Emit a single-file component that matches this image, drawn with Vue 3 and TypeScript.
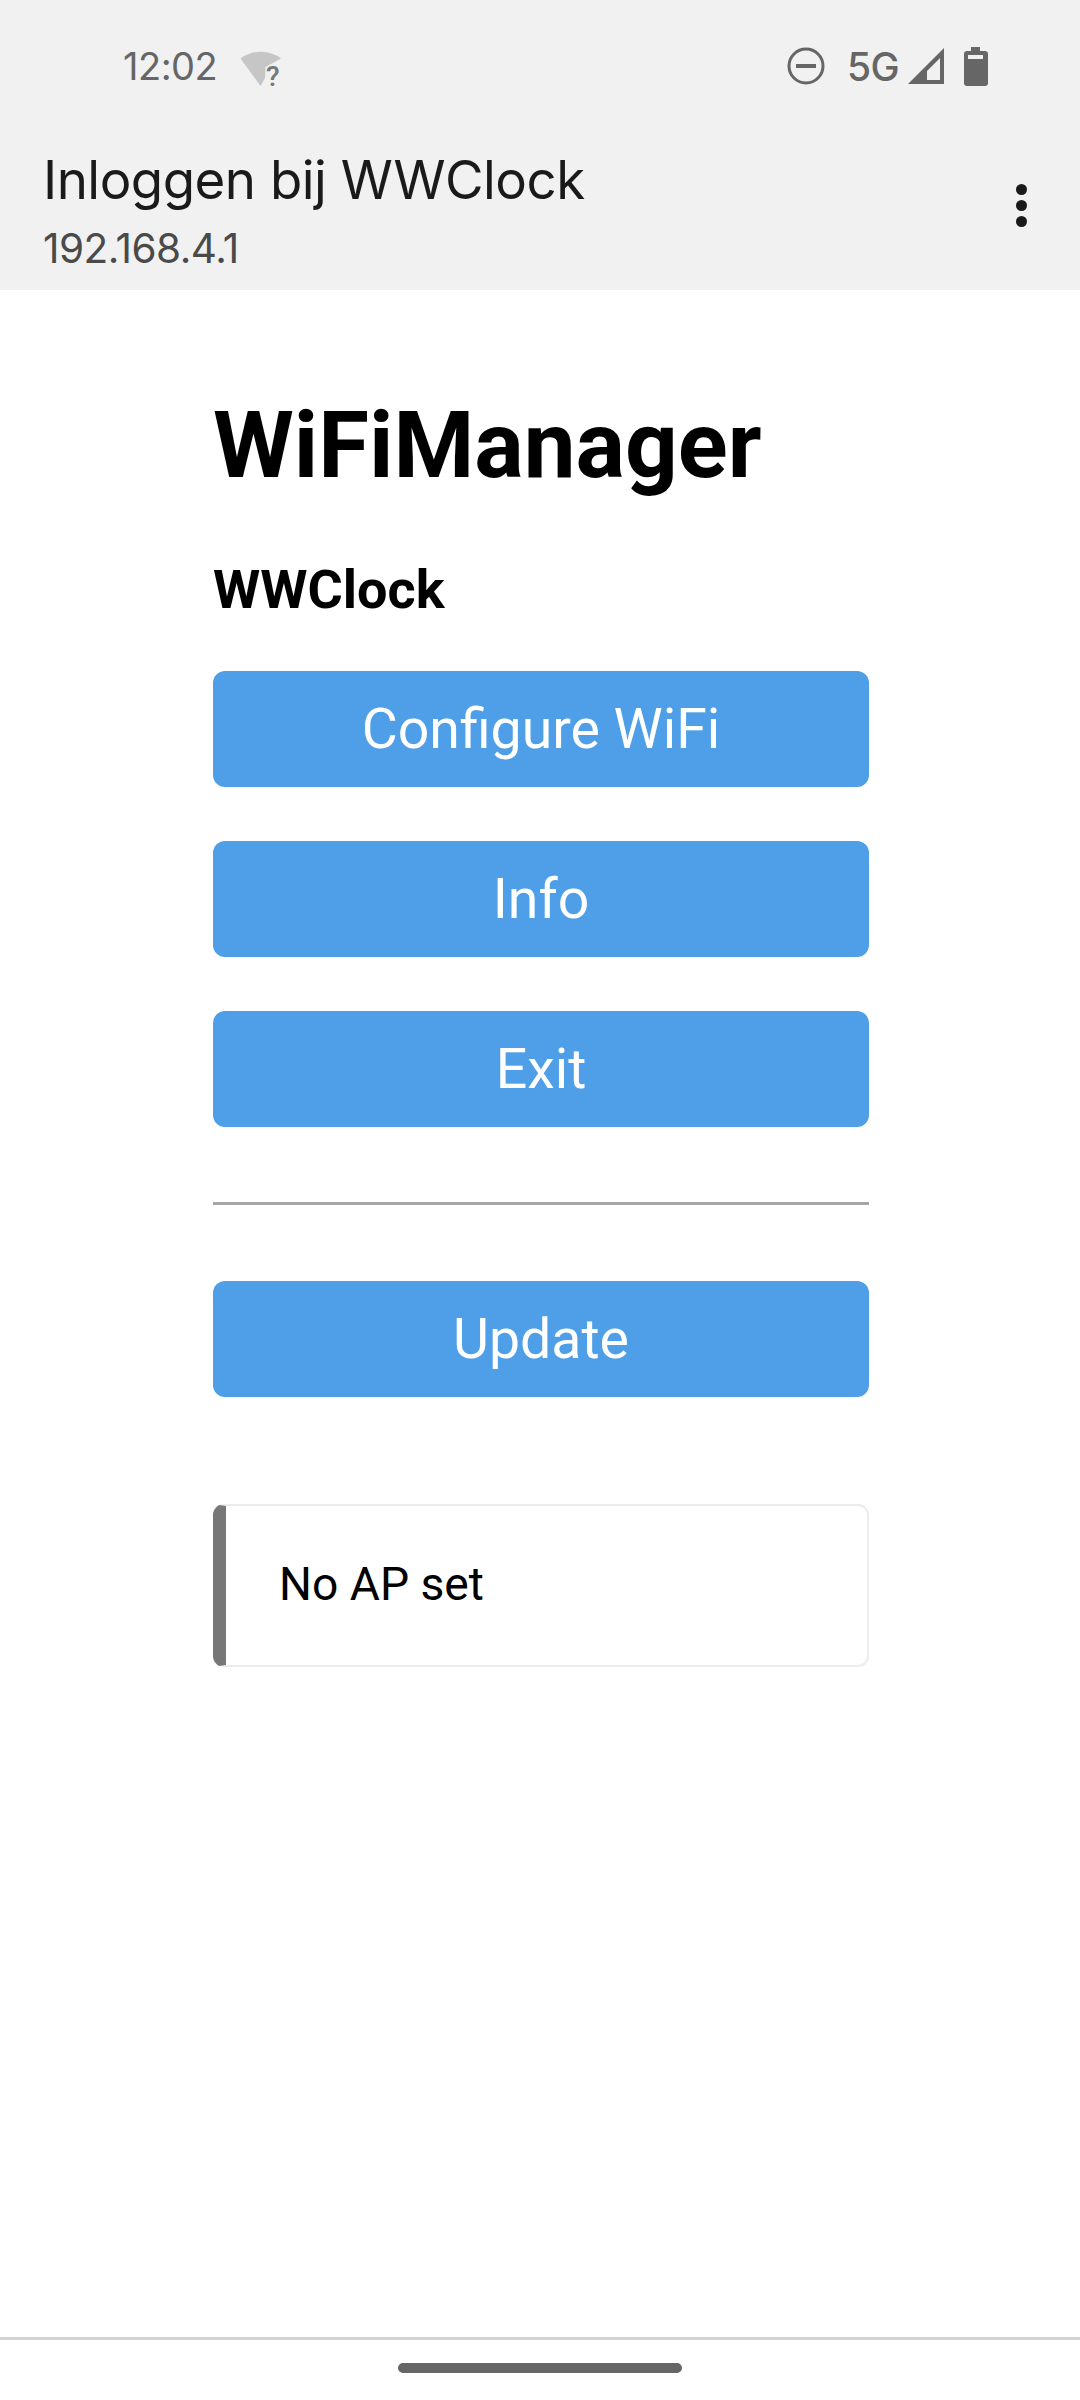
<script setup lang="ts">
const menuItems = ["Configure WiFi", "Info", "Exit"];
</script>

<template>
  <div class="screen">
    <header class="topbar">
      <div class="status">
        <span class="time">12:02</span>
        <svg class="wifi" width="44" height="36" viewBox="0 0 44 36">
          <path d="M1.500 6.500 A34 34 0 0 1 42 6.500 L26.500 15 L26 26 L21.500 34 Z" fill="#c6c6c6" />
          <text x="27" y="34" class="wifi-q">?</text>
        </svg>
        <span class="spacer"></span>
        <svg class="dnd" width="40" height="40" viewBox="0 0 40 40">
          <circle cx="20" cy="20" r="17" fill="none" stroke="#666" stroke-width="3" />
          <rect x="10" y="18" width="20" height="4" fill="#666" />
        </svg>
        <span class="net">5G</span>
        <svg class="signal" width="38" height="38" viewBox="0 0 38 38">
          <path d="M1 37 L37 1 V37 Z M20 33 H33 V11 L20 24 Z" fill="#666" fill-rule="evenodd" />
        </svg>
        <svg class="battery" width="24" height="39" viewBox="0 0 24 39">
          <path d="M7 0 H16 V4 H21 Q24 4 24 7 V36 Q24 39 21 39 H3 Q0 39 0 36 V7 Q0 4 3 4 H7 Z" fill="#666" />
          <rect x="4" y="8" width="15" height="4" fill="#f1f1f1" />
        </svg>
      </div>
      <div class="titlebar">
        <div class="titles">
          <div class="title">Inloggen bij WWClock</div>
          <div class="address">192.168.4.1</div>
        </div>
        <div class="more">
          <i></i><i></i><i></i>
        </div>
      </div>
    </header>

    <main class="content">
      <h1>WiFiManager</h1>
      <h3>WWClock</h3>
      <nav class="menu">
        <button v-for="item in menuItems" :key="item">{{ item }}</button>
      </nav>
      <hr />
      <button class="update">Update</button>
      <div class="msg">No AP set</div>
    </main>

    <footer class="navbar">
      <div class="pill"></div>
    </footer>
  </div>
</template>

<style>
html,
body {
  margin: 0;
  background: #fff;
}
</style>

<style scoped>
.screen {
  width: 1080px;
  height: 2400px;
  display: flex;
  flex-direction: column;
  background: #fff;
  font-family: Roboto, sans-serif;
}

.topbar {
  height: 290px;
  flex: none;
  background: #f1f1f1;
}

.status {
  height: 132px;
  display: flex;
  align-items: center;
  padding: 0 92px 0 123px;
  box-sizing: border-box;
  color: #666;
}

.time {
  font-family: Inter, sans-serif;
  font-size: 38px;
  margin-right: 22px;
  letter-spacing: -0.5px;
}

.wifi {
  margin-top: 8px;
  overflow: visible;
}

.wifi-q {
  font-family: Roboto, sans-serif;
  font-size: 28px;
  font-weight: 500;
  fill: #777;
}

.spacer {
  flex: 1;
}

.net {
  font-family: Inter, sans-serif;
  font-size: 39px;
  font-weight: 500;
  margin-left: 21px;
  width: 60px;
  letter-spacing: -0.5px;
}

.signal {
  margin-right: 19px;
}

.titlebar {
  display: flex;
  align-items: center;
  justify-content: space-between;
  padding: 17px 53px 0 43px;
}

.title {
  font-family: Inter, sans-serif;
  font-size: 52.800px;
  line-height: 62px;
  color: #1a1a1a;
  letter-spacing: -0.5px;
}

.address {
  font-family: Inter, sans-serif;
  font-size: 40.500px;
  line-height: 56px;
  margin-top: 10px;
  color: #4a4a4a;
  letter-spacing: -0.5px;
}

.more {
  display: flex;
  flex-direction: column;
  gap: 5px;
  margin-top: -16px;
}

.more i {
  display: block;
  width: 11px;
  height: 11px;
  border-radius: 50%;
  background: #1a1a1a;
}

.content {
  flex: 1;
  padding: 0 211px 0 213px;
}

h1 {
  margin: 102px 0 0;
  font-size: 92.4px;
  line-height: 108px;
  font-weight: 700;
  color: #000;
}

h3 {
  margin: 58px 0 0;
  font-size: 54px;
  line-height: 63px;
  font-weight: 700;
  color: #000;
}

.menu {
  display: flex;
  flex-direction: column;
  gap: 54px;
  margin-top: 50px;
}

button {
  display: block;
  width: 100%;
  height: 116px;
  border: 0;
  border-radius: 12px;
  background: #4e9fe8;
  color: #fff;
  font-family: Roboto, sans-serif;
  font-size: 55.4px;
  padding: 0;
}

hr {
  height: 3px;
  margin: 75px 0 76px;
  border: 0;
  background: #a6a6a6;
}

.msg {
  margin-top: 107px;
  height: 163px;
  box-sizing: border-box;
  display: flex;
  align-items: center;
  padding: 0 0 3px 53px;
  border: 2px solid #ececec;
  border-left: 13px solid #777;
  border-radius: 11px;
  font-size: 46.2px;
  color: #000;
}

.navbar {
  height: 63px;
  flex: none;
  box-sizing: border-box;
  border-top: 3px solid #d3d3d3;
  display: flex;
  justify-content: center;
  padding-top: 23px;
}

.pill {
  width: 284px;
  height: 10px;
  border-radius: 5px;
  background: #666;
}
</style>
